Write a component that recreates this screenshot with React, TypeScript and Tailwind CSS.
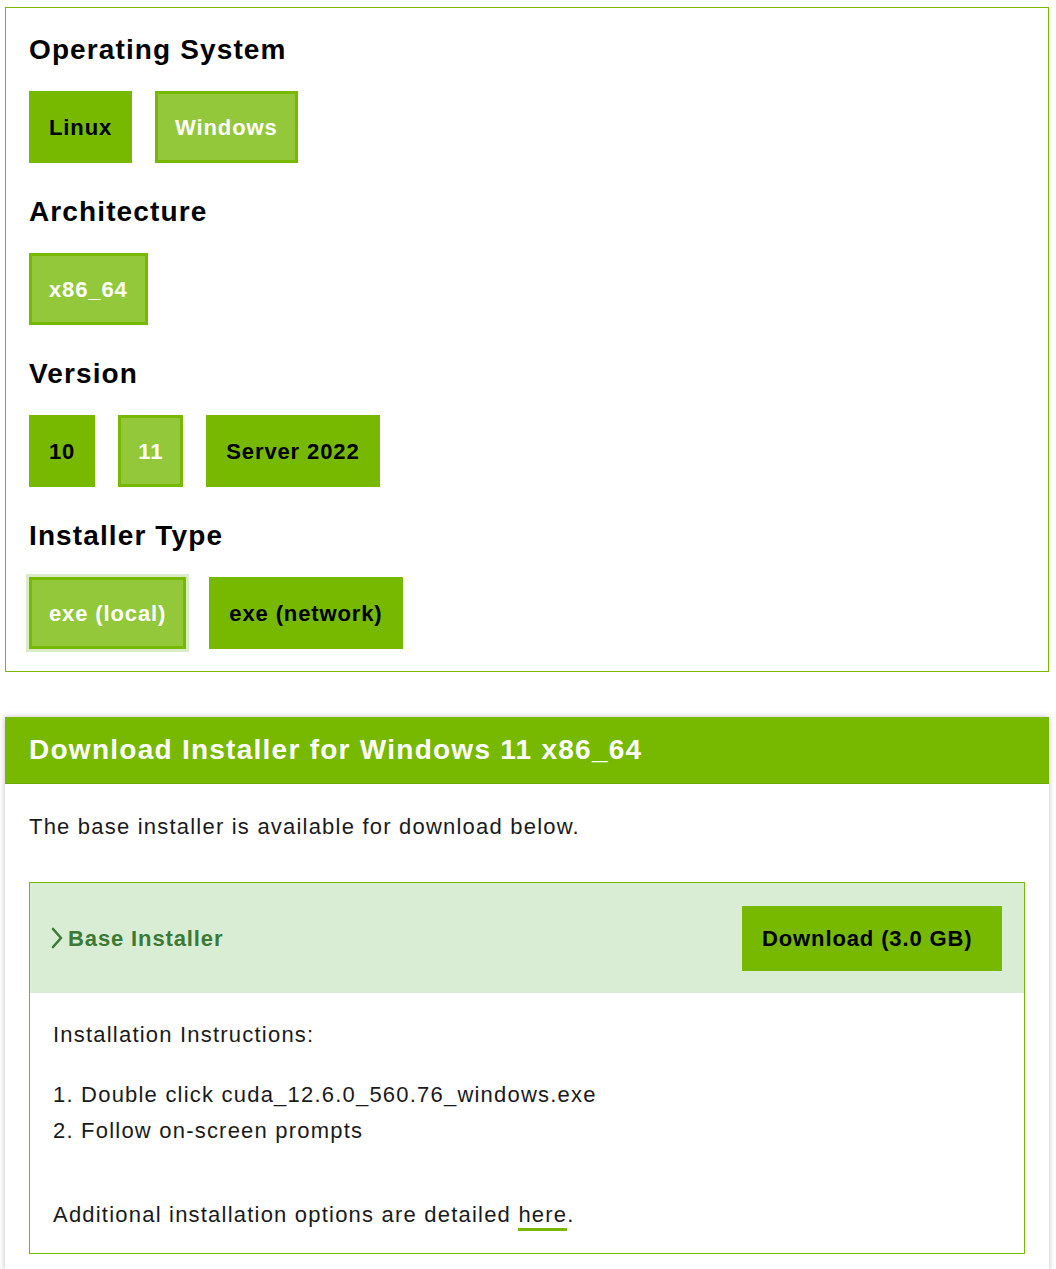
import React from "react";

const font = { fontFamily: '"Liberation Sans", Arial, sans-serif' };

function Btn({ label, selected, focused }: { label: string; selected?: boolean; focused?: boolean }) {
  const base =
    "h-[72px] px-[17px] flex items-center justify-center text-[22px] font-bold tracking-[0.04em] border-[3px] border-[#76b900]";
  const cls = selected
    ? base + " bg-[#93c83a] text-white"
    : base + " bg-[#76b900] text-black";
  if (focused) {
    return (
      <div className="p-[3px] -m-[3px] bg-[#dcebc7]">
        <div className={cls}>{label}</div>
      </div>
    );
  }
  return <div className={cls}>{label}</div>;
}

function Section({ title, children }: { title: string; children: React.ReactNode }) {
  return (
    <div>
      <h2 className="text-[28px] font-bold tracking-[0.04em] leading-[34px] text-black">{title}</h2>
      <div className="mt-[24px] flex gap-[23px]">{children}</div>
    </div>
  );
}

export default function App() {
  return (
    <div style={font} className="w-[1056px] min-h-[1269px] bg-white pt-[7px] pl-[5px] pr-[7px] text-black">
      <div className="border border-[#7ab800] pl-[23px] pt-[25px] pb-[22px] flex flex-col gap-[32px] w-[1044px]">
        <Section title="Operating System">
          <Btn label="Linux" />
          <Btn label="Windows" selected />
        </Section>
        <Section title="Architecture">
          <Btn label="x86_64" selected />
        </Section>
        <Section title="Version">
          <Btn label="10" />
          <Btn label="11" selected />
          <Btn label="Server 2022" />
        </Section>
        <Section title="Installer Type">
          <Btn label="exe (local)" selected focused />
          <Btn label="exe (network)" />
        </Section>
      </div>

      <div className="mt-[45px] w-[1044px] bg-white shadow-[0_0_6px_rgba(0,0,0,0.25)] pb-[16px]">
        <div className="h-[67px] bg-[#76b900] border-b border-[#6aa800] flex items-center px-[24px]">
          <h1 className="text-[28px] font-bold tracking-[0.045em] text-white">
            Download Installer for Windows 11 x86_64
          </h1>
        </div>
        <div className="px-[24px]">
          <p className="mt-[29px] text-[22px] tracking-[0.055em] text-[#1a1a1a] leading-[28px]">
            The base installer is available for download below.
          </p>
          <div className="mt-[41px] border border-[#76b900]">
            <div className="h-[110px] bg-[#d9ecd4] flex items-center justify-between pl-[20px] pr-[22px]">
              <div className="flex items-center gap-[4px] text-[#3b7a35]">
                <svg width="14" height="24" viewBox="0 0 14 24" fill="none">
                  <path d="M3 3 L11 12 L3 21" stroke="#3b7a35" strokeWidth="2.6" strokeLinecap="round" strokeLinejoin="round" />
                </svg>
                <span className="text-[22px] font-bold tracking-[0.04em]">Base Installer</span>
              </div>
              <div className="h-[65px] w-[260px] bg-[#76b900] flex items-center pl-[20px] text-[22px] font-bold tracking-[0.04em] text-black">
                Download (3.0 GB)
              </div>
            </div>
            <div className="pl-[23px] pt-[28px] pb-[24px] text-[22px] tracking-[0.055em] text-[#1a1a1a] leading-[28px]">
              <p>Installation Instructions:</p>
              <ol className="mt-[32px] flex flex-col gap-[8px]">
                <li>1. Double click cuda_12.6.0_560.76_windows.exe</li>
                <li>2. Follow on-screen prompts</li>
              </ol>
              <p className="mt-[56px]">
                Additional installation options are detailed{" "}
                <span className="border-b-[3px] border-[#76b900] pb-[1px]">here</span>.
              </p>
            </div>
          </div>
        </div>
      </div>
    </div>
  );
}
